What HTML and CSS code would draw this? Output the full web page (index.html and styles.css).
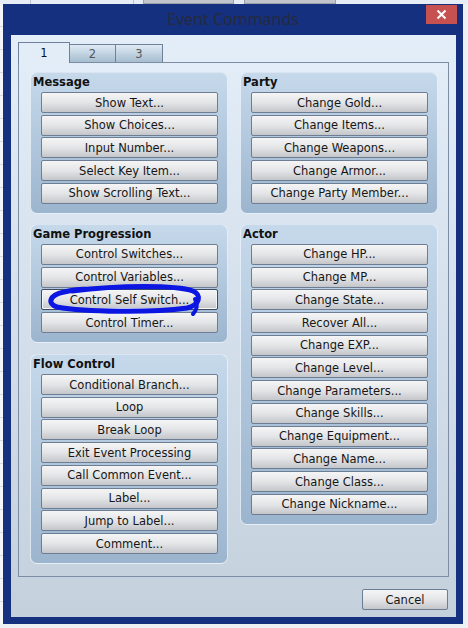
FILE: index.html
```html
<!DOCTYPE html>
<html lang="en">
<head>
    <meta charset="UTF-8">
    <title>Event Commands</title>
    <link rel="stylesheet" href="styles.css">
</head>
<body>
    <div class="backdrop-top">
        <span class="bt bt-light"></span>
        <span class="bt bt-gray bt-a"></span>
        <span class="bt bt-gray bt-b"></span>
    </div>

    <div class="screen">
        <div class="backdrop-left"></div>

        <div class="window">
            <div class="titlebar">
                <span></span>
                <span class="title">Event Commands</span>
                <button class="close" aria-label="Close">
                    <svg width="11" height="11" viewBox="0 0 11 11"><path d="M1.5 1.5 L9.5 9.5 M9.5 1.5 L1.5 9.5" stroke="#fff" stroke-width="2"/></svg>
                </button>
            </div>

            <div class="client">
                <div class="tabs">
                    <div class="tab active">1</div>
                    <div class="tab">2</div>
                    <div class="tab">3</div>
                </div>

                <div class="panel">
                    <div class="grid">
                        <div class="group">
                            <div class="group-title">Message</div>
                            <div class="buttons">
                                <button class="cmd">Show Text...</button>
                                <button class="cmd">Show Choices...</button>
                                <button class="cmd">Input Number...</button>
                                <button class="cmd">Select Key Item...</button>
                                <button class="cmd">Show Scrolling Text...</button>
                            </div>
                        </div>

                        <div class="group">
                            <div class="group-title">Party</div>
                            <div class="buttons">
                                <button class="cmd">Change Gold...</button>
                                <button class="cmd">Change Items...</button>
                                <button class="cmd">Change Weapons...</button>
                                <button class="cmd">Change Armor...</button>
                                <button class="cmd">Change Party Member...</button>
                            </div>
                        </div>

                        <div class="stack">
                            <div class="group">
                                <div class="group-title">Game Progression</div>
                                <div class="buttons">
                                    <button class="cmd">Control Switches...</button>
                                    <button class="cmd">Control Variables...</button>
                                    <button class="cmd focused">Control Self Switch...</button>
                                    <button class="cmd">Control Timer...</button>
                                </div>
                            </div>

                            <div class="group">
                                <div class="group-title">Flow Control</div>
                                <div class="buttons">
                                    <button class="cmd">Conditional Branch...</button>
                                    <button class="cmd">Loop</button>
                                    <button class="cmd">Break Loop</button>
                                    <button class="cmd">Exit Event Processing</button>
                                    <button class="cmd">Call Common Event...</button>
                                    <button class="cmd">Label...</button>
                                    <button class="cmd">Jump to Label...</button>
                                    <button class="cmd">Comment...</button>
                                </div>
                            </div>
                        </div>

                        <div class="group">
                            <div class="group-title">Actor</div>
                            <div class="buttons">
                                <button class="cmd">Change HP...</button>
                                <button class="cmd">Change MP...</button>
                                <button class="cmd">Change State...</button>
                                <button class="cmd">Recover All...</button>
                                <button class="cmd">Change EXP...</button>
                                <button class="cmd">Change Level...</button>
                                <button class="cmd">Change Parameters...</button>
                                <button class="cmd">Change Skills...</button>
                                <button class="cmd">Change Equipment...</button>
                                <button class="cmd">Change Name...</button>
                                <button class="cmd">Change Class...</button>
                                <button class="cmd">Change Nickname...</button>
                            </div>
                        </div>
                    </div>
                </div>

                <div class="footer">
                    <button class="cmd cancel">Cancel</button>
                </div>
            </div>
        </div>
    </div>

    <!-- hand-drawn marker around the self switch button -->
    <svg class="scribble" width="468" height="628" viewBox="0 0 468 628">
        <path d="M72 291 C120 285 176 285 193 291 C202 295 200 305 187 308 C150 313 85 312 57 307 C47 304 49 295 64 292 C72 290 80 289 90 289"
              fill="none" stroke="#0b16e2" stroke-width="5" stroke-linecap="round"/>
        <path d="M195 299 C198 305 197 310 193 314" fill="none" stroke="#0b16e2" stroke-width="4" stroke-linecap="round"/>
    </svg>
</body>
</html>
```

FILE: styles.css
```css
:root {
    --frame: #15307f;
    --btn-border: #6d7d94;
    --text: #161616;
}

body {
    margin: 0;
    width: 468px;
    height: 628px;
    overflow: hidden;
    background: #eef1f4;
    font-family: "DejaVu Sans", Verdana, sans-serif;
    font-size: 11.5px;
    color: var(--text);
}

/* bits of the editor window behind the dialog */
.backdrop-top {
    height: 4px;
    display: flex;
    background: #e6edf6;
}

.bt { display: block; height: 4px; }
.bt-light { width: 102px; margin-left: 30px; border-left: 1px solid #b9c3cf; border-right: 1px solid #b9c3cf; }
.bt-gray { background: #c2c6cc; border: 1px solid #9aa1ab; border-top: none; box-sizing: border-box; }
.bt-a { width: 91px; margin-left: 9px; }
.bt-b { width: 92px; margin-left: 10px; }

.screen {
    display: flex;
}

.backdrop-left {
    width: 3px;
    height: 620px;
    background: repeating-linear-gradient(#f3f5f8 0 22px, #d6dbe2 22px 23px);
}

.window {
    width: 460px;
    height: 620px;
    background: var(--frame);
    padding: 0 7px 7px 8px;
    box-sizing: border-box;
    display: flex;
    flex-direction: column;
}

.titlebar {
    height: 31px;
    display: grid;
    grid-template-columns: 1fr auto 1fr;
    margin: 0 -7px 0 -8px;
}

.title {
    font-family: "Noto Sans", "Open Sans", sans-serif;
    font-size: 16px;
    color: #262a3c;
    line-height: 31px;
}

.close {
    justify-self: end;
    align-self: start;
    width: 31px;
    height: 19px;
    margin: 1px 6px 0 0;
    padding: 0;
    border: none;
    background: #c75050;
    display: flex;
    align-items: center;
    justify-content: center;
}

.client {
    flex: 1;
    padding: 7px 7px 0;
    background: linear-gradient(#e3eef9, #c4d0dc);
}

.tabs {
    display: flex;
    align-items: flex-end;
    height: 21px;
    position: relative;
    z-index: 1;
    margin-bottom: -1px;
}

.tab {
    width: 46px;
    height: 19px;
    box-sizing: border-box;
    border: 1px solid #6f809a;
    border-bottom: 1px solid #7d8da5;
    margin-left: -1px;
    background: linear-gradient(#dfeaf4, #a6bdd0);
    color: #555;
    text-align: center;
    line-height: 18px;
}

.tab.active {
    width: 52px;
    height: 21px;
    margin-left: 0;
    border-bottom: none;
    background: #e2edf8;
    color: #111;
    line-height: 20px;
}

.tab.active + .tab { margin-left: 0; border-left: none; width: 46px; }
.tab:last-child { width: 48px; }

.panel {
    height: 515px;
    box-sizing: border-box;
    border: 1px solid #7d8da5;
    padding: 9px 10px 0 11px;
}

.grid {
    display: grid;
    grid-template-columns: 198px 198px;
    column-gap: 12px;
    row-gap: 10px;
    align-items: start;
}

.stack {
    display: flex;
    flex-direction: column;
    gap: 11px;
}

.group {
    border: 1px solid rgba(240, 246, 252, 0.75);
    border-radius: 7px;
    background: linear-gradient(#c6d9eb, #9cb5ce);
    padding-bottom: 9px;
}

.group-title {
    height: 19px;
    line-height: 19px;
    padding-left: 2px;
    font-weight: bold;
    color: #111;
}

.buttons {
    display: flex;
    flex-direction: column;
    gap: 1.73px;
    padding-left: 10px;
}

.cmd {
    width: 177px;
    height: 21px;
    padding: 0;
    border: 1px solid var(--btn-border);
    border-radius: 2px;
    background: linear-gradient(#f5f5f6, #e4e5e7 50%, #c4c6ca);
    font-family: "DejaVu Sans", Verdana, sans-serif;
    font-size: 11.5px;
    color: var(--text);
    text-align: center;
}

.cmd.focused {
    border-color: #3e4b5e;
    box-shadow: inset 0 0 0 1px #f4f6f8;
}

.footer {
    display: flex;
    justify-content: flex-end;
    padding: 12px 1px 0 0;
}

.cancel {
    width: 86px;
}

.scribble {
    position: absolute;
    left: 0;
    top: 0;
    pointer-events: none;
}
```
